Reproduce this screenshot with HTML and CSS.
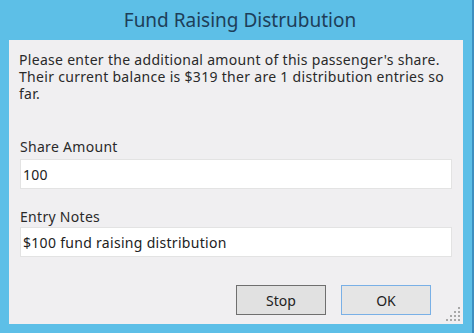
FILE: index.html
```html
<!DOCTYPE html>
<html lang="en">
<head>
<meta charset="UTF-8">
<meta name="viewport" content="width=device-width, initial-scale=1.0">
<title>Fund Raising Distrubution</title>
<link rel="stylesheet" href="styles.css">
</head>
<body>
<div class="window">
<div class="titlebar">Fund Raising Distrubution</div>
<div class="panel">
<p class="message">Please enter the additional amount of this passenger's share. Their current balance is $319 ther are 1 distribution entries so far.</p>
<label class="field-label label-share" for="share">Share Amount</label>
<input type="text" class="field" id="share" value="100" />
<label class="field-label label-notes" for="notes">Entry Notes</label>
<input type="text" class="field" id="notes" value="$100 fund raising distribution" />
<div class="actions">
<button class="btn btn-stop">Stop</button>
<button class="btn btn-ok">OK</button>
</div>
<svg class="grip" width="16" height="16" viewBox="0 0 16 16">
<rect x="13" y="1" width="2" height="2" />
<rect x="9" y="5" width="2" height="2" />
<rect x="13" y="5" width="2" height="2" />
<rect x="5" y="9" width="2" height="2" />
<rect x="9" y="9" width="2" height="2" />
<rect x="13" y="9" width="2" height="2" />
<rect x="1" y="13" width="2" height="2" />
<rect x="5" y="13" width="2" height="2" />
<rect x="9" y="13" width="2" height="2" />
<rect x="13" y="13" width="2" height="2" />
</svg>
</div>
</div>
</body>
</html>
```

FILE: styles.css
```css
body {
margin: 0;
font-family: 'Noto Sans', 'Open Sans', sans-serif;
background-color: #5dbfe7;
}
.window {
width: 474px;
height: 333px;
box-sizing: border-box;
background-color: #5dbfe7;
border-right: 2px solid #3d8fc0;
display: flex;
flex-direction: column;
}
.titlebar {
height: 40px;
display: flex;
justify-content: center;
align-items: center;
font-size: 19px;
color: #1d3e59;
padding-left: 8px;
}
.panel {
position: relative;
width: 454px;
height: 284px;
margin-left: 9px;
box-sizing: border-box;
background-color: #f0eff1;
padding: 11px 11px 0 11px;
display: flex;
flex-direction: column;
}
.message {
margin: 0 0 0 -1px;
font-size: 14px;
letter-spacing: 0.3px;
line-height: 17px;
color: #2a2a2a;
}
.field-label {
font-size: 14px;
letter-spacing: 0.3px;
line-height: 17px;
color: #2a2a2a;
}
.label-share {
margin-top: 36px;
margin-bottom: 4px;
}
.label-notes {
margin-top: 19px;
margin-bottom: 2px;
}
.field {
width: 432px;
height: 30px;
box-sizing: border-box;
border: 1px solid #e3e3e3;
background-color: #fff;
padding: 0 0 0 2px;
font-family: inherit;
font-size: 14px;
letter-spacing: 0.3px;
color: #222;
outline: none;
}
.actions {
display: flex;
justify-content: flex-end;
gap: 15px;
margin-top: 28px;
padding-right: 21px;
}
.btn {
width: 90px;
height: 30px;
font-family: inherit;
font-size: 14px;
color: #222;
background-color: #e1e1e1;
border: 1px solid #adadad;
padding: 0;
}
.btn-stop {
border-color: #6f6f6f;
}
.btn-ok {
border-color: #79b0e6;
background-color: #e5e5e5;
}
.grip {
position: absolute;
right: 2px;
bottom: 2px;
fill: #a8a8a8;
}
```
